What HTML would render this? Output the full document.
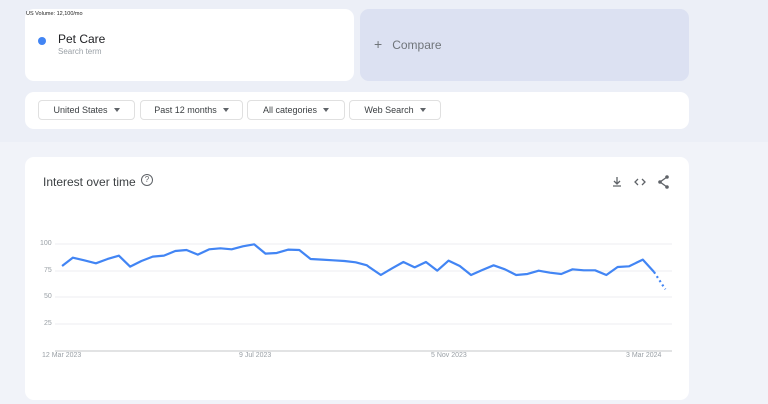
<!DOCTYPE html><html><head><style>
body{margin:0;width:768px;height:404px;overflow:hidden;background:#f1f3f9;font-family:"Liberation Sans",sans-serif;position:relative}
.top{position:absolute;left:0;top:0;width:768px;height:142px;background:#eceff7}
.card{position:absolute;background:#fff;border-radius:9px}
.btn{position:absolute;top:100px;height:20px;border:1px solid #e0e0e0;border-radius:4px;box-sizing:border-box;font-size:9px;color:#3c4043;display:flex;align-items:center;justify-content:center;gap:6px}
.tri{width:0;height:0;border-left:3px solid transparent;border-right:3px solid transparent;border-top:4px solid #5f6368}
.lbl{position:absolute;font-size:7px;color:#9aa0a6}
</style></head><body>
<div class="top"></div>
<div class="card" style="left:25px;top:9px;width:329px;height:72px"></div>
<div style="position:absolute;left:26px;top:11px;font-size:5.5px;color:#222">US Volume: 12,100/mo</div>
<div style="position:absolute;left:38px;top:37px;width:8px;height:8px;border-radius:50%;background:#4285f4"></div>
<div style="position:absolute;left:58px;top:32px;font-size:12px;color:#202124">Pet Care</div>
<div style="position:absolute;left:58px;top:47px;font-size:8px;color:#9aa0a6">Search term</div>
<div style="position:absolute;left:360px;top:9px;width:329px;height:72px;background:#dce1f2;border-radius:9px"></div>
<div style="position:absolute;left:374px;top:38px;font-size:12px;color:#70757a"><span style="font-size:14px;line-height:12px">+</span>&nbsp;&nbsp;&nbsp;Compare</div>
<div class="card" style="left:25px;top:92px;width:664px;height:37px"></div>
<div class="btn" style="left:38px;width:97px">United States <span class="tri"></span></div>
<div class="btn" style="left:140px;width:103px">Past 12 months <span class="tri"></span></div>
<div class="btn" style="left:247px;width:98px">All categories <span class="tri"></span></div>
<div class="btn" style="left:349px;width:92px">Web Search <span class="tri"></span></div>
<div class="card" style="left:25px;top:157px;width:664px;height:243px"></div>
<div style="position:absolute;left:43px;top:175px;font-size:12px;color:#3c4043">Interest over time</div>
<div style="position:absolute;left:141px;top:174px;width:10px;height:10px;border:1px solid #5f6368;border-radius:50%;font-size:8px;line-height:10px;text-align:center;color:#5f6368">?</div>
<svg style="position:absolute;left:0;top:0" width="768" height="404">
<g stroke="#5f6368" stroke-width="1.3" fill="none">
<path d="M617 177v7M614 181l3 3 3-3M613 186h8"/>
<path d="M638 179l-3 3 3 3M642 179l3 3-3 3"/>
<path d="M667 177l-7 5 7 5"/>
</g>
<g fill="#5f6368"><circle cx="667" cy="177" r="1.8"/><circle cx="660" cy="182" r="1.8"/><circle cx="667" cy="187" r="1.8"/></g>
<g stroke="#eceef0" stroke-width="1"><line x1="55" y1="244" x2="672" y2="244"/><line x1="55" y1="271" x2="672" y2="271"/><line x1="55" y1="297" x2="672" y2="297"/><line x1="55" y1="324" x2="672" y2="324"/></g>
<line x1="55" y1="351" x2="672" y2="351" stroke="#d8dadc" stroke-width="1.5"/>
<g transform="translate(20,160) scale(0.4337,0.3333)" fill="none" stroke="#4285f4" stroke-width="2.2" stroke-linejoin="round">
<polyline vector-effect="non-scaling-stroke" points="97,318 122,293 148,301 175,310 202,297 228,287 254,320 280,303 306,290 332,287 358,273 384,270 410,284 436,268 462,265 488,268 514,259 540,253 566,281 592,279 618,269 644,270 670,297 696,299 722,301 748,303 774,307 800,316 806,322 832,345 858,325 884,306 910,322 936,306 962,332 988,302 1014,318 1040,345 1066,330 1092,316 1118,328 1144,345 1170,342 1196,332 1222,338 1248,342 1274,328 1300,331 1326,331 1352,345 1378,321 1404,319 1436,299 1462,336"/>
<polyline vector-effect="non-scaling-stroke" stroke-dasharray="2 3" points="1462,336 1488,388"/>
</g>
</svg>
<div class="lbl" style="left:40px;top:240px">100</div>
<div class="lbl" style="left:44px;top:267px">75</div>
<div class="lbl" style="left:44px;top:293px">50</div>
<div class="lbl" style="left:44px;top:320px">25</div>
<div class="lbl" style="left:42px;top:352px">12 Mar 2023</div>
<div class="lbl" style="left:239px;top:352px">9 Jul 2023</div>
<div class="lbl" style="left:431px;top:352px">5 Nov 2023</div>
<div class="lbl" style="left:626px;top:352px">3 Mar 2024</div>
</body></html>
